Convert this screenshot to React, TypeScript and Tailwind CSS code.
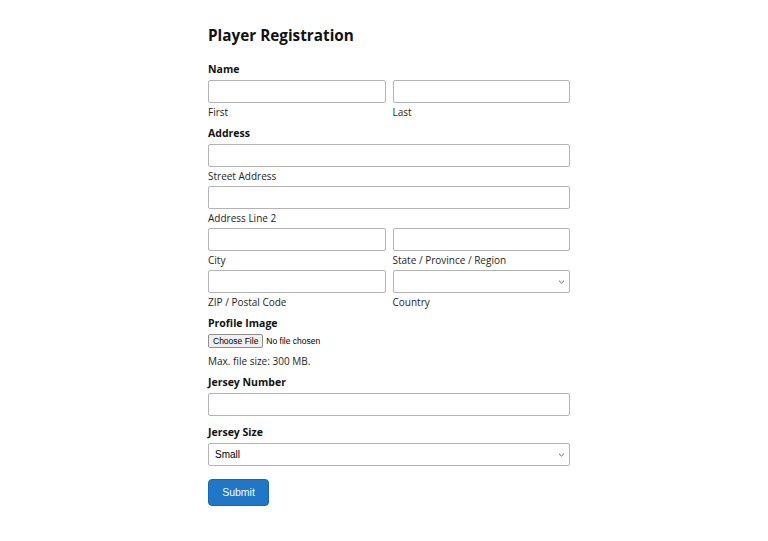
import React from 'react';

const inputCls =
  'block w-full h-[23px] border border-[#b4b4b4] rounded-[2px] bg-white px-[6px] text-[10px] outline-none';

const Sub: React.FC<{ children: React.ReactNode }> = ({ children }) => (
  <div className="mt-[2px] text-[10px] leading-[14px] text-[#1e1e1e]">{children}</div>
);

const Label: React.FC<{ children: React.ReactNode }> = ({ children }) => (
  <div className="mb-[4px] text-[10.5px] font-bold leading-[14px] text-[#111]">{children}</div>
);

const Chevron = () => (
  <svg className="pointer-events-none absolute right-[5px] top-1/2 -translate-y-1/2" width="7" height="5" viewBox="0 0 7 5" fill="none">
    <path d="M1 1.2 3.5 3.6 6 1.2" stroke="#666" strokeWidth="1" />
  </svg>
);

const App: React.FC = () => {
  return (
    <div className="min-h-[541px] bg-white" style={{ fontFamily: '"Open Sans", "Noto Sans", sans-serif' }}>
      <form className="ml-[208px] w-[362px] pt-[25px]">
        <h1 className="text-[15.3px] font-bold leading-[20px] text-[#111]">Player Registration</h1>

        {/* Name */}
        <div className="mt-[17px]">
          <Label>Name</Label>
          <div className="grid grid-cols-2 gap-x-[7px]">
            <div>
              <input className={inputCls} />
              <Sub>First</Sub>
            </div>
            <div>
              <input className={inputCls} />
              <Sub>Last</Sub>
            </div>
          </div>
        </div>

        {/* Address */}
        <div className="mt-[7px]">
          <Label>Address</Label>
          <div className="flex flex-col gap-[3px]">
            <div>
              <input className={inputCls} />
              <Sub>Street Address</Sub>
            </div>
            <div>
              <input className={inputCls} />
              <Sub>Address Line 2</Sub>
            </div>
            <div className="grid grid-cols-2 gap-x-[7px] gap-y-[3px]">
              <div>
                <input className={inputCls} />
                <Sub>City</Sub>
              </div>
              <div>
                <input className={inputCls} />
                <Sub>State / Province / Region</Sub>
              </div>
              <div>
                <input className={inputCls} />
                <Sub>ZIP / Postal Code</Sub>
              </div>
              <div>
                <div className="relative">
                  <select className={`${inputCls} appearance-none`} defaultValue="">
                    <option value=""></option>
                  </select>
                  <Chevron />
                </div>
                <Sub>Country</Sub>
              </div>
            </div>
          </div>
        </div>

        {/* Profile image */}
        <div className="mt-[7px]">
          <Label>Profile Image</Label>
          <input
            type="file"
            className="block h-[14px] text-[8.5px] leading-[14px] text-black file:mr-[3px] file:h-[14px] file:rounded-[2px] file:border file:border-[#8f8f8f] file:bg-[#efefef] file:px-[4px] file:text-[8.5px] file:leading-[12px] file:text-black"
            style={{ fontFamily: '"Liberation Sans", Arial, sans-serif' }}
          />
          <div className="mt-[6px] text-[10px] leading-[14px] text-[#1e1e1e]">Max. file size: 300 MB.</div>
        </div>

        {/* Jersey number */}
        <div className="mt-[7px]">
          <Label>Jersey Number</Label>
          <input className={inputCls} />
        </div>

        {/* Jersey size */}
        <div className="mt-[9px]">
          <Label>Jersey Size</Label>
          <div className="relative">
            <select
              className={`${inputCls} appearance-none text-[9.5px] text-black`}
              style={{ fontFamily: '"Liberation Sans", Arial, sans-serif' }}
              defaultValue="Small"
            >
              <option>Small</option>
              <option>Medium</option>
              <option>Large</option>
              <option>X-Large</option>
            </select>
            <Chevron />
          </div>
        </div>

        <button
          type="button"
          className="mt-[13px] h-[27px] w-[61px] rounded-[4px] border border-[#1667b3] bg-[#1e77c9] text-[10.5px] text-white"
          style={{ fontFamily: '"Liberation Sans", Arial, sans-serif' }}
        >
          Submit
        </button>
      </form>
    </div>
  );
};

export default App;
